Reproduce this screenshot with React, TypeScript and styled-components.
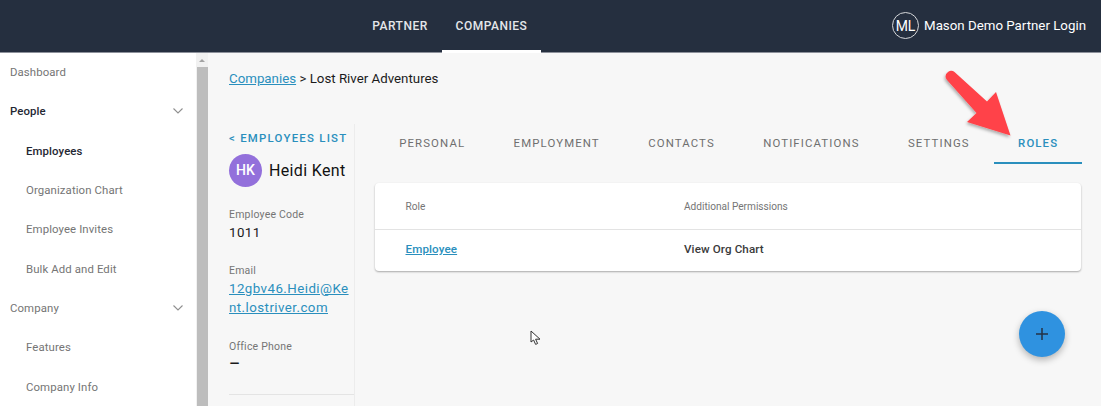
import React from "react";
import styled, { createGlobalStyle } from "styled-components";

const Global = createGlobalStyle`
  html, body { margin: 0; padding: 0; height: 406px; overflow: hidden; background: #f7f7f7; }
  body { font-family: Roboto, "Liberation Sans", sans-serif; }
  * { box-sizing: border-box; }
`;

const Page = styled.div`
  position: relative;
  width: 1101px;
  height: 406px;
  overflow: hidden;
  display: flex;
  flex-direction: column;
`;

const Header = styled.header`
  position: relative;
  z-index: 1;
  height: 53px;
  flex: none;
  background: #252f3f;
  border-bottom: 1px solid #8d919b;
  display: flex;
  justify-content: space-between;
  align-items: stretch;
  padding-left: 358px;
`;

const TopNav = styled.nav`
  display: flex;
`;

const TopLink = styled.a<{ $active?: boolean }>`
  width: ${(p) => (p.$active ? "99px" : "84px")};
  height: 53px;
  padding-top: 2px;
  display: flex;
  align-items: center;
  justify-content: center;
  color: #e4e6e9;
  font-size: 12px;
  font-weight: 500;
  letter-spacing: 0.5px;
  border-bottom: 3px solid ${(p) => (p.$active ? "#ffffff" : "transparent")};
`;

const User = styled.div`
  display: flex;
  align-items: center;
  gap: 5px;
  padding-right: 15px;
  padding-bottom: 1px;
  color: #fff;
  font-size: 13.3px;
`;

const Initials = styled.span`
  width: 27px;
  height: 27px;
  border-radius: 50%;
  border: 1px solid #d5d7da;
  display: flex;
  align-items: center;
  justify-content: center;
  font-size: 14px;
`;

const Body = styled.div`
  flex: 1;
  min-height: 0;
  display: flex;
`;

const Sidebar = styled.aside`
  width: 196px;
  flex: none;
  background: #fff;
  margin-top: -0.5px;
`;

const NavItem = styled.div<{ $indent?: boolean; $strong?: boolean }>`
  height: 39.3px;
  display: flex;
  align-items: center;
  justify-content: space-between;
  padding: 0 12px 0 ${(p) => (p.$indent ? "26px" : "10px")};
  font-size: 11.4px;
  letter-spacing: 0.1px;
  font-weight: ${(p) => (p.$strong ? 500 : 400)};
  color: ${(p) => (p.$strong ? "#1f2733" : "#757575")};
`;

const Scrollbar = styled.div`
  width: 12px;
  flex: none;
  background: #f1f1f1;
  display: flex;
  flex-direction: column;
  align-items: center;
`;

const ScrollUp = styled.div`
  height: 14px;
  flex: none;
  display: flex;
  align-items: center;
  &::before {
    content: "";
    border-left: 3px solid transparent;
    border-right: 3px solid transparent;
    border-bottom: 3px solid #a3a3a3;
  }
`;

const ScrollThumb = styled.div`
  width: 11px;
  flex: 1;
  background: #bdbdbd;
`;

const Main = styled.main`
  flex: 1;
  min-width: 0;
  padding: 17px 20px 0 21px;
`;

const Crumbs = styled.div`
  font-size: 13.3px;
  line-height: 17px;
  color: #1b1b1b;
  height: 54px;
`;

const Link = styled.a`
  color: #2a8fbd;
  text-decoration: underline;
`;

const Columns = styled.div`
  display: flex;
`;

const Profile = styled.div`
  width: 126px;
  height: 300px;
  flex: none;
  border-right: 1px solid #ececec;
  padding-top: 7px;
`;

const BackLink = styled.div`
  color: #2a8fbd;
  font-size: 11.4px;
  font-weight: 500;
  letter-spacing: 1.25px;
  line-height: 14px;
  white-space: nowrap;
`;

const NameRow = styled.div`
  display: flex;
  align-items: center;
  gap: 7px;
  margin-top: 8px;
  height: 34px;
`;

const Avatar = styled.span`
  width: 33px;
  height: 33px;
  border-radius: 50%;
  background: #9370db;
  color: #fff;
  font-size: 14px;
  font-weight: 500;
  display: flex;
  align-items: center;
  justify-content: center;
`;

const Name = styled.span`
  font-size: 16px;
  font-weight: 400;
  letter-spacing: 0.35px;
  color: #111;
  white-space: nowrap;
`;

const Field = styled.div<{ $gap: number }>`
  margin-top: ${(p) => p.$gap}px;
`;

const FieldLabel = styled.div`
  font-size: 10.5px;
  letter-spacing: 0.2px;
  line-height: 14px;
  color: #757575;
`;

const FieldValue = styled.div<{ $empty?: boolean }>`
  font-size: ${(p) => (p.$empty ? "17px" : "13.3px")};
  font-weight: ${(p) => (p.$empty ? 500 : 400)};
  line-height: 19.5px;
  letter-spacing: 0.45px;
  color: #1b1b1b;
  margin-top: 0.5px;
  word-break: break-all;
`;

const Divider = styled.div`
  width: 125px;
  height: 1px;
  background: #e4e4e4;
  margin-top: 20px;
`;

const Content = styled.div`
  flex: 1;
  min-width: 0;
  margin-left: 20px;
`;

const Tabs = styled.div`
  display: flex;
  height: 40px;
`;

const Tab = styled.div<{ $active?: boolean }>`
  padding: 0 24.2px 1px;
  display: flex;
  align-items: center;
  font-size: 11.4px;
  font-weight: ${(p) => (p.$active ? 500 : 400)};
  letter-spacing: 1.12px;
  color: ${(p) => (p.$active ? "#2a8fbd" : "#6f6f6f")};
  border-bottom: 2px solid ${(p) => (p.$active ? "#2a8fbd" : "transparent")};
  white-space: nowrap;
`;

const Card = styled.div`
  margin-top: 19px;
  height: 88px;
  background: #fff;
  border-radius: 4px;
  box-shadow: 0 1px 2px rgba(0, 0, 0, 0.32);
`;

const Row = styled.div<{ $head?: boolean }>`
  display: grid;
  grid-template-columns: 278.5px 1fr;
  align-items: center;
  height: ${(p) => (p.$head ? "47px" : "41px")};
  padding-left: 30.5px;
  padding-bottom: ${(p) => (p.$head ? "0" : "3px")};
  border-bottom: ${(p) => (p.$head ? "1px solid #e3e3e3" : "none")};
  font-size: ${(p) => (p.$head ? "10.1px" : "11.6px")};
  font-weight: ${(p) => (p.$head ? 400 : 500)};
  color: ${(p) => (p.$head ? "#757575" : "#3a3a3a")};
  letter-spacing: ${(p) => (p.$head ? "0" : "0.12px")};
`;

const Fab = styled.button`
  position: absolute;
  left: 1019px;
  top: 311px;
  width: 46px;
  height: 46px;
  border: 0;
  border-radius: 50%;
  background: #2f92e0;
  box-shadow: 0 3px 7px rgba(0, 0, 0, 0.28);
  display: flex;
  align-items: center;
  justify-content: center;
  padding: 0;
`;

const Overlay = styled.svg<{ $x: number; $y: number }>`
  position: absolute;
  left: ${(p) => p.$x}px;
  top: ${(p) => p.$y}px;
  overflow: visible;
  z-index: 2;
`;

const Chevron = () => (
  <svg width="12" height="8" viewBox="0 0 12 8" fill="none">
    <path d="M1.5 1.5 6 6l4.5-4.5" stroke="#8f8f8f" strokeWidth="1.1" />
  </svg>
);

export default function App() {
  return (
    <Page>
      <Global />
      <Header>
        <TopNav>
          <TopLink>PARTNER</TopLink>
          <TopLink $active>COMPANIES</TopLink>
        </TopNav>
        <User>
          <Initials>ML</Initials>
          <span>Mason Demo Partner Login</span>
        </User>
      </Header>
      <Body>
        <Sidebar>
          <NavItem>Dashboard</NavItem>
          <NavItem $strong>
            People
            <Chevron />
          </NavItem>
          <NavItem $indent $strong>Employees</NavItem>
          <NavItem $indent>Organization Chart</NavItem>
          <NavItem $indent>Employee Invites</NavItem>
          <NavItem $indent>Bulk Add and Edit</NavItem>
          <NavItem>
            Company
            <Chevron />
          </NavItem>
          <NavItem $indent>Features</NavItem>
          <NavItem $indent>Company Info</NavItem>
        </Sidebar>
        <Scrollbar>
          <ScrollUp />
          <ScrollThumb />
        </Scrollbar>
        <Main>
          <Crumbs>
            <Link>Companies</Link> &gt; Lost River Adventures
          </Crumbs>
          <Columns>
            <Profile>
              <BackLink>&lt; EMPLOYEES LIST</BackLink>
              <NameRow>
                <Avatar>HK</Avatar>
                <Name>Heidi Kent</Name>
              </NameRow>
              <Field $gap={21}>
                <FieldLabel>Employee Code</FieldLabel>
                <FieldValue>1011</FieldValue>
              </Field>
              <Field $gap={22}>
                <FieldLabel>Email</FieldLabel>
                <FieldValue>
                  <Link>12gbv46.Heidi@Kent.lostriver.com</Link>
                </FieldValue>
              </Field>
              <Field $gap={22}>
                <FieldLabel>Office Phone</FieldLabel>
                <FieldValue $empty>–</FieldValue>
              </Field>
              <Divider />
            </Profile>
            <Content>
              <Tabs>
                <Tab>PERSONAL</Tab>
                <Tab>EMPLOYMENT</Tab>
                <Tab>CONTACTS</Tab>
                <Tab>NOTIFICATIONS</Tab>
                <Tab>SETTINGS</Tab>
                <Tab $active>ROLES</Tab>
              </Tabs>
              <Card>
                <Row $head>
                  <span>Role</span>
                  <span>Additional Permissions</span>
                </Row>
                <Row>
                  <Link>Employee</Link>
                  <span>View Org Chart</span>
                </Row>
              </Card>
            </Content>
          </Columns>
        </Main>
      </Body>
      <Fab aria-label="Add">
        <svg width="14" height="14" viewBox="0 0 14 14">
          <path d="M7 1v12M1 7h12" stroke="#253246" strokeWidth="1.5" />
        </svg>
      </Fab>
      <Overlay $x={940} $y={66} width="80" height="76" viewBox="0 0 80 76">
        <defs>
          <filter id="s" x="-20%" y="-20%" width="140%" height="140%">
            <feDropShadow dx="-1" dy="2" stdDeviation="1.5" floodColor="#000" floodOpacity="0.3" />
          </filter>
        </defs>
        <path
          d="M7.5 6.5a5 5 0 0 1 7-0.5L47 35.5 56 26 70.5 69.5 27 56 36.5 47 7 14a5 5 0 0 1 0.5-7.5Z"
          fill="#ff4248"
          filter="url(#s)"
        />
      </Overlay>
      <Overlay $x={530} $y={330} width="12" height="16" viewBox="0 0 12 16">
        <path
          d="M1 1v11l2.6-2 2 4.4 2-.9-2-4.3H10L1 1Z"
          fill="#fff"
          stroke="#333"
          strokeWidth="1"
        />
      </Overlay>
    </Page>
  );
}
